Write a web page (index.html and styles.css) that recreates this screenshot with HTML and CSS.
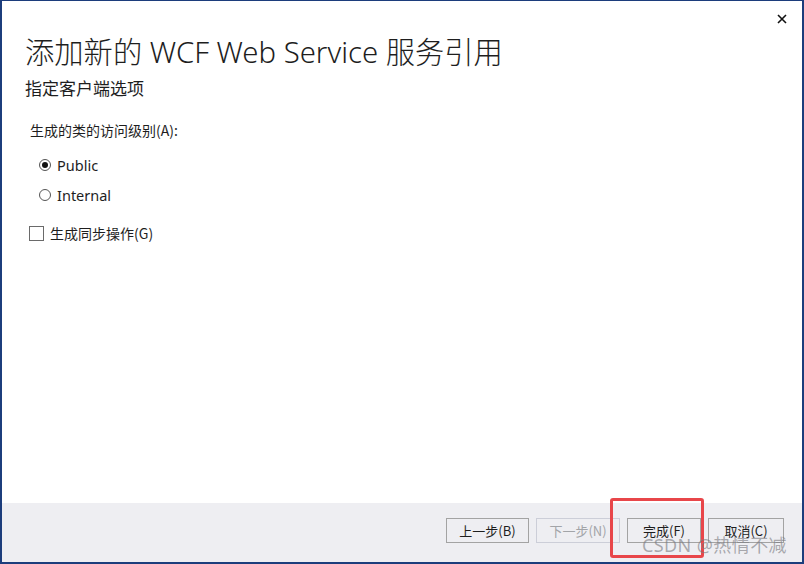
FILE: index.html
```html
<!DOCTYPE html>
<html>
<head>
    <meta charset="utf-8">
    <title>添加新的 WCF Web Service 服务引用</title>
    <link rel="stylesheet" href="styles.css">
</head>
<body>
    <div class="dialog">
        <span class="close">
            <svg width="10" height="10" viewBox="0 0 10 10">
                <path d="M1 1 L9 9 M9 1 L1 9" stroke="#111" stroke-width="1.6" fill="none"/>
            </svg>
        </span>

        <div class="content">
            <h1 class="title">添加新的 WCF Web Service 服务引用</h1>
            <p class="subtitle">指定客户端选项</p>

            <div class="options">
                <p class="label">生成的类的访问级别(A):</p>
                <label class="radio"><span class="dot checked"></span>Public</label>
                <label class="radio"><span class="dot"></span>Internal</label>
                <label class="check"><span class="box"></span>生成同步操作(G)</label>
            </div>
        </div>

        <div class="footer">
            <button class="btn w83">上一步(B)</button>
            <button class="btn w84" disabled>下一步(N)</button>
            <button class="btn w74">完成(F)</button>
            <button class="btn w76">取消(C)</button>
        </div>

        <div class="mark"></div>
        <div class="watermark">CSDN @热情不减</div>
    </div>
</body>
</html>
```

FILE: styles.css
```css
* {
    margin: 0;
    padding: 0;
    box-sizing: border-box;
}

body {
    width: 804px;
    height: 564px;
    background: #fff;
    font-family: "Noto Sans", "Noto Sans CJK SC", sans-serif;
    color: #1e1e1e;
    overflow: hidden;
}

.dialog {
    position: relative;
    width: 804px;
    height: 564px;
    display: flex;
    flex-direction: column;
    border: 2px solid #1c3d7c;
    border-top-width: 1px;
    background: #fff;
}

.close {
    position: absolute;
    top: 13px;
    right: 15px;
    width: 10px;
    height: 10px;
    display: flex;
}

.content {
    flex: 1;
    padding: 31px 0 0 23px;
}

.title {
    font-family: "Noto Sans", "Noto Sans CJK SC", sans-serif;
    font-size: 29.3px;
    font-weight: 300;
    line-height: 40px;
}

.subtitle {
    font-family: "Noto Sans CJK SC", sans-serif;
    font-size: 17px;
    line-height: 24px;
    margin-top: 4px;
}

.options {
    padding: 20px 0 0 4px;
    font-size: 14px;
}

.options .label {
    font-family: "Noto Sans CJK SC", sans-serif;
    line-height: 20px;
    margin-left: 1px;
}

.radio {
    display: flex;
    align-items: center;
    height: 30px;
    padding-left: 10px;
    margin-top: 10px;
    font-size: 14.5px;
}

.radio + .radio {
    margin-top: 0;
}

.dot {
    width: 12px;
    height: 12px;
    border: 1px solid #555;
    border-radius: 50%;
    margin-right: 6px;
    display: flex;
    align-items: center;
    justify-content: center;
}

.dot.checked::after {
    content: "";
    width: 6px;
    height: 6px;
    border-radius: 50%;
    background: #111;
}

.check {
    display: flex;
    align-items: center;
    margin-top: 13px;
    font-family: "Noto Sans CJK SC", sans-serif;
}

.box {
    width: 15px;
    height: 15px;
    border: 1px solid #6a6a6a;
    margin-right: 6px;
    background: #fff;
}

.footer {
    height: 59px;
    background: #eeeef2;
    display: flex;
    justify-content: flex-end;
    align-items: flex-start;
    gap: 7px;
    padding: 15px 18px 0 0;
}

.btn {
    height: 25px;
    font-family: "Noto Sans CJK SC", sans-serif;
    font-size: 13px;
    color: #1e1e1e;
    background: #eeeef2;
    border: 1px solid #a3a3a3;
}

.btn:disabled {
    color: #a2a4a8;
    border-color: #ccced8;
}

.w83 { width: 83px; }
.w84 { width: 84px; }
.w74 { width: 74px; }
.w76 { width: 76px; }

.mark {
    position: absolute;
    left: 608px;
    top: 497px;
    width: 94px;
    height: 60px;
    border: 3px solid #e8464a;
    border-radius: 3px;
}

.watermark {
    position: absolute;
    left: 640px;
    top: 530px;
    font-family: "Noto Sans", "Noto Sans CJK SC", sans-serif;
    font-size: 18px;
    color: rgba(120, 120, 125, 0.6);
    letter-spacing: 0.4px;
}
```
